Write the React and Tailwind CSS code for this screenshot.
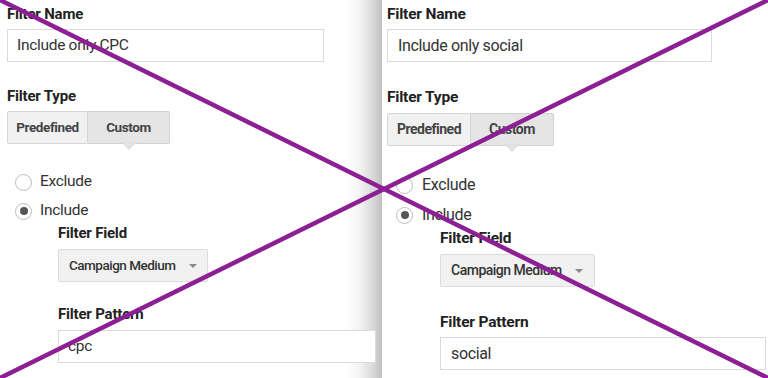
import React from "react";

const variants = {
  a: {
    root: "w-[382px] shrink-0 pl-[7px] pt-[4px] bg-[linear-gradient(to_right,#fff_346px,#f3f3f3_360px,#d9d9d9_373px,#c2c2c2_381px)]",
    label: "h-5 text-[15px] tracking-[-0.2px] leading-5 font-bold text-[#222]",
    text: "text-[15.5px] tracking-[-0.3px] text-[#333]",
    nameInput: "mt-[5px] w-[317px] h-[33px] pl-[9px]",
    typeLabel: "mt-[24px]",
    seg: "mt-[5px] h-[33px]",
    predef: "w-[81px]",
    custom: "w-[82px]",
    segText: "text-[13.5px] tracking-[-0.4px]",
    exclude: "mt-[28px]",
    include: "mt-[9px]",
    radio: "ml-[8px] gap-[8px]",
    indent: "ml-[51px]",
    fieldLabel: "mt-[2px]",
    select: "mt-[6px] w-[150px] h-[33px] pl-[10px] pr-[10px]",
    selectText: "text-[13.5px] tracking-[-0.5px]",
    patternLabel: "mt-[22px]",
    patternInput: "mt-[6px] w-[318px] h-[33px] pl-[9px]",
  },
  b: {
    root: "flex-1 pl-[5px] pt-[4px] bg-white",
    label: "h-5 text-[15.5px] tracking-[-0.2px] leading-5 font-bold text-[#222]",
    text: "text-[16px] tracking-[-0.35px] text-[#333]",
    nameInput: "mt-[5px] w-[325px] h-[33px] pl-[10px]",
    typeLabel: "mt-[25px]",
    seg: "mt-[6px] h-[33px]",
    predef: "w-[84px]",
    custom: "w-[83px]",
    segText: "text-[14px] tracking-[-0.5px]",
    exclude: "mt-[29px]",
    include: "mt-[10px]",
    radio: "ml-[9px] gap-[9px]",
    indent: "ml-[53px]",
    fieldLabel: "mt-[3px]",
    select: "mt-[6px] w-[155px] h-[33px] pl-[10px] pr-[11px]",
    selectText: "text-[14px] tracking-[-0.5px]",
    patternLabel: "mt-[25px]",
    patternInput: "mt-[5px] w-[326px] h-[33px] pl-[10px]",
  },
};

const Radio = ({ checked }) => (
  <span className="w-[17px] h-[17px] rounded-full border border-[#bdbdbd] bg-white flex items-center justify-center shrink-0">
    {checked && <span className="w-[8px] h-[8px] rounded-full bg-[#555]" />}
  </span>
);

const Panel = ({ v, name, pattern }) => {
  const s = variants[v];
  return (
    <div className={s.root}>
      {/* Filter name */}
      <div className={s.label}>Filter Name</div>
      <div className={`${s.nameInput} ${s.text} border border-[#dadada] bg-white flex items-center`}>
        {name}
      </div>

      {/* Filter type */}
      <div className={`${s.typeLabel} ${s.label}`}>Filter Type</div>
      <div className={`${s.seg} flex ${s.segText} font-bold text-[#444]`}>
        <div className={`${s.predef} h-full flex items-center justify-center bg-[#f1f1f1] border border-[#d6d6d6] rounded-l-[2px]`}>
          Predefined
        </div>
        <div className={`${s.custom} relative h-full flex items-center justify-center bg-[#e5e5e5] border border-l-0 border-[#d0d0d0] rounded-r-[2px]`}>
          Custom
          <span className="absolute left-1/2 -translate-x-1/2 top-full mt-[-1px] w-0 h-0 border-l-[8px] border-r-[8px] border-t-[8px] border-l-transparent border-r-transparent border-t-[#e2e2e2]" />
        </div>
      </div>

      {/* Exclude / include */}
      <div className={`${s.exclude} h-5 flex items-center ${s.radio} ${s.text}`}>
        <Radio />
        <span>Exclude</span>
      </div>
      <div className={`${s.include} h-5 flex items-center ${s.radio} ${s.text}`}>
        <Radio checked />
        <span>Include</span>
      </div>

      <div className={s.indent}>
        <div className={`${s.fieldLabel} ${s.label}`}>Filter Field</div>
        <div className={`${s.select} flex items-center justify-between bg-[#f1f1f1] border border-[#dcdcdc] rounded-[2px]`}>
          <span className={`${s.selectText} font-medium text-[#333]`}>Campaign Medium</span>
          <span className="w-0 h-0 border-l-[4px] border-r-[4px] border-t-[4px] border-l-transparent border-r-transparent border-t-[#888]" />
        </div>

        <div className={`${s.patternLabel} ${s.label}`}>Filter Pattern</div>
        <div className={`${s.patternInput} ${s.text} border border-[#dadada] bg-white flex items-center`}>
          {pattern}
        </div>
      </div>
    </div>
  );
};

export default function App() {
  return (
    <div className="relative w-[768px] h-[378px] overflow-hidden flex bg-white font-['Roboto','Liberation_Sans',sans-serif]">
      <Panel v="a" name="Include only CPC" pattern="cpc" />
      <Panel v="b" name="Include only social" pattern="social" />

      {/* crossed-out mark */}
      <svg className="absolute inset-0 pointer-events-none" width="768" height="378" viewBox="0 0 768 378">
        <line x1="0" y1="0" x2="768" y2="378" stroke="#8d1f94" strokeWidth="4.5" />
        <line x1="768" y1="0" x2="0" y2="378" stroke="#8d1f94" strokeWidth="4.5" />
      </svg>
    </div>
  );
}
